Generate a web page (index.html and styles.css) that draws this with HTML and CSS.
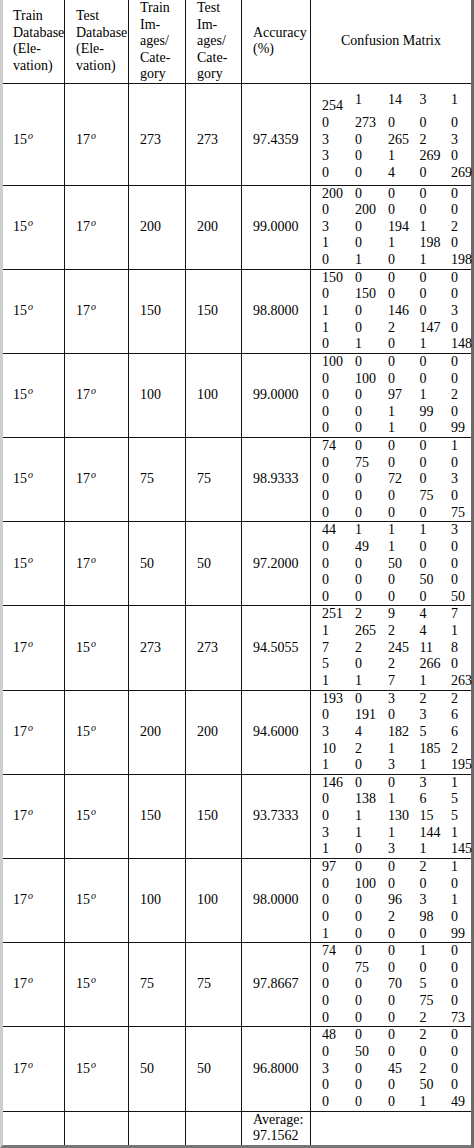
FILE: index.html
```html
<!DOCTYPE html>
<html>
<head>
<meta charset="utf-8">
<link rel="stylesheet" href="styles.css">
</head>
<body>
<table class="tbl">
<colgroup>
<col class="w1"><col class="w2"><col class="w3"><col class="w4"><col class="w5"><col class="w6">
</colgroup>
<tr class="head">
<th class="c1">Train<br>Database<br>(Ele-<br>vation)</th>
<th>Test<br>Database<br>(Ele-<br>vation)</th>
<th>Train<br>Im-<br>ages/<br>Cate-<br>gory</th>
<th>Test<br>Im-<br>ages/<br>Cate-<br>gory</th>
<th>Accuracy<br>(%)</th>
<th class="c6 title">Confusion Matrix</th>
</tr>
<tr class="first">
<td class="c1">15<span class="deg">o</span></td><td>17<span class="deg">o</span></td><td>273</td><td>273</td><td>97.4359</td>
<td class="c6"><div class="mx"><span>254</span><span class="up">1</span><span class="up">14</span><span class="up">3</span><span class="up">1</span><span>0</span><span>273</span><span>0</span><span>0</span><span>0</span><span>3</span><span>0</span><span>265</span><span>2</span><span>3</span><span>3</span><span>0</span><span>1</span><span>269</span><span>0</span><span>0</span><span>0</span><span>4</span><span>0</span><span>269</span></div></td>
</tr>
<tr class="row">
<td class="c1">15<span class="deg">o</span></td><td>17<span class="deg">o</span></td><td>200</td><td>200</td><td>99.0000</td>
<td class="c6"><div class="mx"><span>200</span><span>0</span><span>0</span><span>0</span><span>0</span><span>0</span><span>200</span><span>0</span><span>0</span><span>0</span><span>3</span><span>0</span><span>194</span><span>1</span><span>2</span><span>1</span><span>0</span><span>1</span><span>198</span><span>0</span><span>0</span><span>1</span><span>0</span><span>1</span><span>198</span></div></td>
</tr>
<tr class="row">
<td class="c1">15<span class="deg">o</span></td><td>17<span class="deg">o</span></td><td>150</td><td>150</td><td>98.8000</td>
<td class="c6"><div class="mx"><span>150</span><span>0</span><span>0</span><span>0</span><span>0</span><span>0</span><span>150</span><span>0</span><span>0</span><span>0</span><span>1</span><span>0</span><span>146</span><span>0</span><span>3</span><span>1</span><span>0</span><span>2</span><span>147</span><span>0</span><span>0</span><span>1</span><span>0</span><span>1</span><span>148</span></div></td>
</tr>
<tr class="row">
<td class="c1">15<span class="deg">o</span></td><td>17<span class="deg">o</span></td><td>100</td><td>100</td><td>99.0000</td>
<td class="c6"><div class="mx"><span>100</span><span>0</span><span>0</span><span>0</span><span>0</span><span>0</span><span>100</span><span>0</span><span>0</span><span>0</span><span>0</span><span>0</span><span>97</span><span>1</span><span>2</span><span>0</span><span>0</span><span>1</span><span>99</span><span>0</span><span>0</span><span>0</span><span>1</span><span>0</span><span>99</span></div></td>
</tr>
<tr class="row">
<td class="c1">15<span class="deg">o</span></td><td>17<span class="deg">o</span></td><td>75</td><td>75</td><td>98.9333</td>
<td class="c6"><div class="mx"><span>74</span><span>0</span><span>0</span><span>0</span><span>1</span><span>0</span><span>75</span><span>0</span><span>0</span><span>0</span><span>0</span><span>0</span><span>72</span><span>0</span><span>3</span><span>0</span><span>0</span><span>0</span><span>75</span><span>0</span><span>0</span><span>0</span><span>0</span><span>0</span><span>75</span></div></td>
</tr>
<tr class="row">
<td class="c1">15<span class="deg">o</span></td><td>17<span class="deg">o</span></td><td>50</td><td>50</td><td>97.2000</td>
<td class="c6"><div class="mx"><span>44</span><span>1</span><span>1</span><span>1</span><span>3</span><span>0</span><span>49</span><span>1</span><span>0</span><span>0</span><span>0</span><span>0</span><span>50</span><span>0</span><span>0</span><span>0</span><span>0</span><span>0</span><span>50</span><span>0</span><span>0</span><span>0</span><span>0</span><span>0</span><span>50</span></div></td>
</tr>
<tr class="row">
<td class="c1">17<span class="deg">o</span></td><td>15<span class="deg">o</span></td><td>273</td><td>273</td><td>94.5055</td>
<td class="c6"><div class="mx"><span>251</span><span>2</span><span>9</span><span>4</span><span>7</span><span>1</span><span>265</span><span>2</span><span>4</span><span>1</span><span>7</span><span>2</span><span>245</span><span>11</span><span>8</span><span>5</span><span>0</span><span>2</span><span>266</span><span>0</span><span>1</span><span>1</span><span>7</span><span>1</span><span>263</span></div></td>
</tr>
<tr class="row">
<td class="c1">17<span class="deg">o</span></td><td>15<span class="deg">o</span></td><td>200</td><td>200</td><td>94.6000</td>
<td class="c6"><div class="mx"><span>193</span><span>0</span><span>3</span><span>2</span><span>2</span><span>0</span><span>191</span><span>0</span><span>3</span><span>6</span><span>3</span><span>4</span><span>182</span><span>5</span><span>6</span><span>10</span><span>2</span><span>1</span><span>185</span><span>2</span><span>1</span><span>0</span><span>3</span><span>1</span><span>195</span></div></td>
</tr>
<tr class="row">
<td class="c1">17<span class="deg">o</span></td><td>15<span class="deg">o</span></td><td>150</td><td>150</td><td>93.7333</td>
<td class="c6"><div class="mx"><span>146</span><span>0</span><span>0</span><span>3</span><span>1</span><span>0</span><span>138</span><span>1</span><span>6</span><span>5</span><span>0</span><span>1</span><span>130</span><span>15</span><span>5</span><span>3</span><span>1</span><span>1</span><span>144</span><span>1</span><span>1</span><span>0</span><span>3</span><span>1</span><span>145</span></div></td>
</tr>
<tr class="row">
<td class="c1">17<span class="deg">o</span></td><td>15<span class="deg">o</span></td><td>100</td><td>100</td><td>98.0000</td>
<td class="c6"><div class="mx"><span>97</span><span>0</span><span>0</span><span>2</span><span>1</span><span>0</span><span>100</span><span>0</span><span>0</span><span>0</span><span>0</span><span>0</span><span>96</span><span>3</span><span>1</span><span>0</span><span>0</span><span>2</span><span>98</span><span>0</span><span>1</span><span>0</span><span>0</span><span>0</span><span>99</span></div></td>
</tr>
<tr class="row">
<td class="c1">17<span class="deg">o</span></td><td>15<span class="deg">o</span></td><td>75</td><td>75</td><td>97.8667</td>
<td class="c6"><div class="mx"><span>74</span><span>0</span><span>0</span><span>1</span><span>0</span><span>0</span><span>75</span><span>0</span><span>0</span><span>0</span><span>0</span><span>0</span><span>70</span><span>5</span><span>0</span><span>0</span><span>0</span><span>0</span><span>75</span><span>0</span><span>0</span><span>0</span><span>0</span><span>2</span><span>73</span></div></td>
</tr>
<tr class="row">
<td class="c1">17<span class="deg">o</span></td><td>15<span class="deg">o</span></td><td>50</td><td>50</td><td>96.8000</td>
<td class="c6"><div class="mx"><span>48</span><span>0</span><span>0</span><span>2</span><span>0</span><span>0</span><span>50</span><span>0</span><span>0</span><span>0</span><span>3</span><span>0</span><span>45</span><span>2</span><span>0</span><span>0</span><span>0</span><span>0</span><span>50</span><span>0</span><span>0</span><span>0</span><span>0</span><span>1</span><span>49</span></div></td>
</tr>
<tr class="avg">
<td class="c1"></td><td></td><td></td><td></td><td>Average:<br>97.1562</td><td class="c6"></td>
</tr>
</table>
</body>
</html>
```
FILE: styles.css
```css
* { box-sizing: border-box; }
html, body { margin: 0; padding: 0; background: #fff; }
body {
  font-family: "Liberation Serif", "Times New Roman", serif;
  font-size: 14px;
  color: #000;
  overflow: hidden;
}
.tbl {
  border-collapse: separate;
  border-spacing: 0;
  table-layout: fixed;
  width: 474px;
  border-left: 3px solid #cdcdcd;
  border-right: 3px solid #6b6b6b;
  border-bottom: 3px solid #777;
}
.w1 { width: 62px; }
.w2 { width: 64px; }
.w3 { width: 57px; }
.w4 { width: 56px; }
.w5 { width: 69px; }
.w6 { width: 160px; }
.tbl th, .tbl td {
  border-right: 1px solid #151515;
  border-bottom: 1px solid #151515;
  padding: 0 0 0 11px;
  vertical-align: middle;
  text-align: left;
  font-weight: normal;
  line-height: 16.64px;
  white-space: nowrap;
  overflow: visible;
}
.tbl .c1 { padding-left: 10px; }
.tbl .c6 { border-right: none; }
.head th { height: 83px; line-height: 16.5px; }
.head .title { text-align: center; padding: 0; }
.first td { height: 102px; padding-top: 13px; }
.first td.c6 { padding-top: 14.7px; padding-bottom: 3px; }
.row td { height: 84.2px; }
.row td.c6 { padding-top: 0; padding-bottom: 0; }
.avg td { height: 33.4px; border-bottom: none; vertical-align: top; }
.deg {
  font-style: italic;
  font-size: 10px;
  vertical-align: 5px;
  line-height: 0;
  margin-left: 1px;
}
.mx {
  display: grid;
  grid-template-columns: 33px 33px 31.5px 31.5px 20px;
  grid-auto-rows: 16.64px;
  line-height: 16.64px;
}
.mx span { white-space: nowrap; }
.mx .up { margin-top: -6px; }
```
